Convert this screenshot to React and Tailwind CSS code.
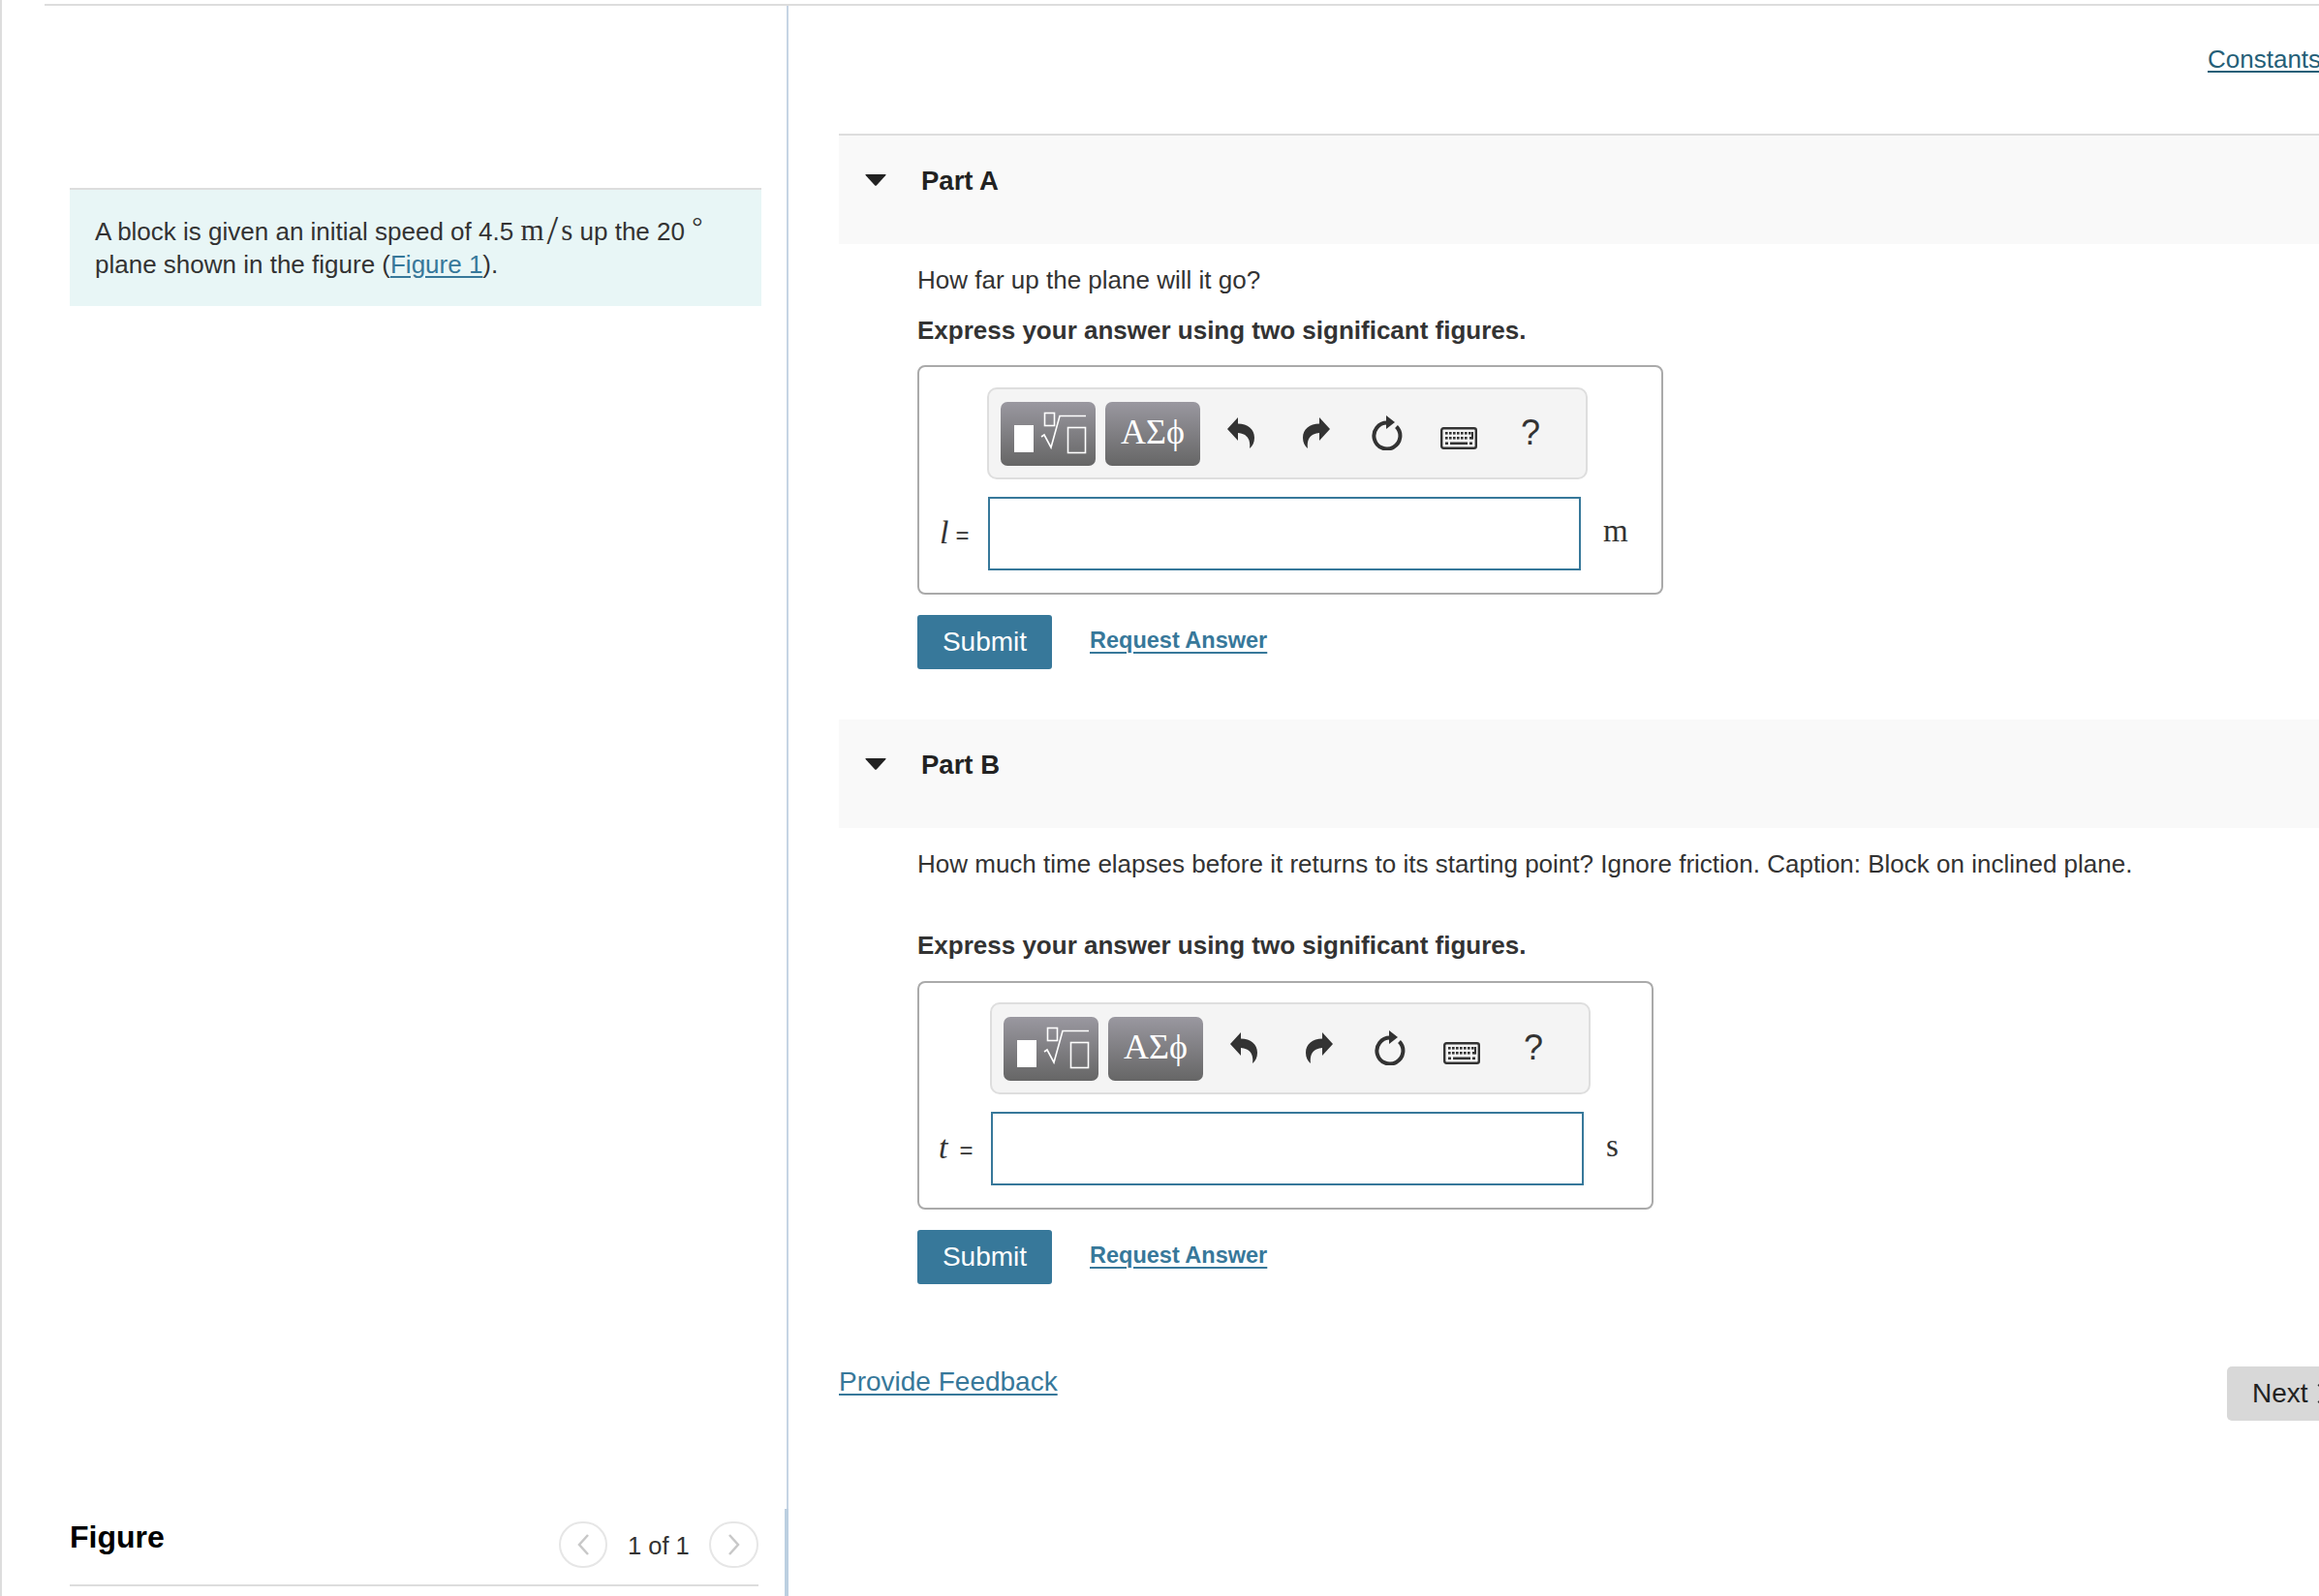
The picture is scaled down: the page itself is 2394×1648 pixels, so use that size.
const sans = "font-['Liberation_Sans',Arial,sans-serif]";

function MathIcon() {
  return (
    <svg viewBox="0 0 98 66" className="w-[98px] h-[66px]" fill="none" stroke="#fff" strokeWidth="1.6">
      <rect x="14" y="24" width="20" height="28" fill="#fff" stroke="none" />
      <rect x="45.5" y="11.5" width="10" height="13" />
      <path d="M42 36 L45 34 L52 47 L61 14.5 H88" />
      <rect x="69.5" y="26.5" width="18" height="26" />
    </svg>
  );
}

function Undo({ flip }) {
  return (
    <svg viewBox="0 0 28 32" className={flip ? "w-[28px] h-[32px] -scale-x-100" : "w-[28px] h-[32px]"} fill="#333">
      <path d="M0 12 L11 0 V6.5 C21 6.5 28 12 28 21 C28 26 26 29.5 23 32 C24 25 22 20 17 17.5 C15 16.5 13 16 11 16 V24 Z" />
    </svg>
  );
}

function Refresh() {
  return (
    <svg viewBox="0 0 32 36" className="w-[32px] h-[36px]" fill="none">
      <path d="M25.5 11.5 A13.5 13.5 0 1 1 16 7.5" stroke="#333" strokeWidth="4" />
      <path d="M15 0 L24 7 L15 14 Z" fill="#333" />
    </svg>
  );
}

function Keyboard() {
  const rows = [
    [5, [5, 9, 13, 17, 21, 25, 29]],
    [10, [5, 9, 13, 17, 21, 25, 30]],
  ];
  return (
    <svg viewBox="0 0 38 23" className="w-[38px] h-[23px]" fill="#333">
      <rect x="1.2" y="1.2" width="35.6" height="20.6" rx="2" fill="none" stroke="#333" strokeWidth="2.4" />
      {rows.map(([y, xs]) => xs.map((x) => <rect key={`${y}-${x}`} x={x} y={y} width="2.6" height="2.6" />))}
      <rect x="32" y="5" width="2" height="7.6" />
      <rect x="5" y="15.5" width="3" height="2.6" />
      <rect x="10" y="15.5" width="18" height="2.6" />
      <rect x="30" y="15.5" width="3" height="2.6" />
    </svg>
  );
}

function Toolbar({ className }) {
  return (
    <div className={`flex items-center h-[95px] w-[620px] pl-[12px] bg-[#f4f4f4] border-2 border-[#dedede] rounded-[10px] ${className}`}>
      <div className="w-[98px] h-[66px] rounded-[7px] bg-gradient-to-b from-[#9a98a0] to-[#666666]">
        <MathIcon />
      </div>
      <div className="ml-[10px] w-[98px] h-[66px] rounded-[7px] bg-gradient-to-b from-[#9a98a0] to-[#666666] flex items-center justify-center pb-[3px] text-white text-[36px] font-['Liberation_Serif',serif]">
        ΑΣϕ
      </div>
      <div className="ml-[28px] mt-[-2px]"><Undo /></div>
      <div className="ml-[50px] mt-[-2px]"><Undo flip /></div>
      <div className="ml-[43px] mt-[-2px]"><Refresh /></div>
      <div className="ml-[39px] mt-[9px]"><Keyboard /></div>
      <div className={`ml-[45px] mt-[-2px] text-[36px] leading-none text-[#333] ${sans}`}>?</div>
    </div>
  );
}

function Part({ name, headerClass, question, questionGap, variable, unit, boxClass, toolbarClass, labelClass, equalsClass, mathGap }) {
  return (
    <section>
      <div className={`flex items-center pl-[27px] pb-[18px] bg-[#f9f9f9] ${headerClass}`}>
        <svg viewBox="0 0 22 12" className="w-[22px] h-[12px] mt-[-2px]" fill="#222">
          <path d="M1 0 H21 Q22 0 21.4 1 L11.8 11.4 Q11 12 10.2 11.4 L0.6 1 Q0 0 1 0 Z" />
        </svg>
        <h2 className="ml-[36px] text-[27.5px] font-bold text-[#222]">{name}</h2>
      </div>
      <div className="pl-[81px]">
        <p className="mt-[20px] leading-[34px] text-[26px] text-[#333]">{question}</p>
        <p className={`${questionGap} leading-[34px] text-[26px] font-bold text-[#333]`}>
          Express your answer using two significant figures.
        </p>
        <div className={`${boxClass} border-2 border-[#aaaaaa] rounded-[8px]`}>
          <Toolbar className={toolbarClass} />
          <div className={`${mathGap} flex items-center h-[76px]`}>
            <div className={`${labelClass} flex items-baseline mb-[4px] text-[#333]`}>
              <span className="italic text-[34px] font-['Liberation_Serif',serif]">{variable}</span>
              <span className={`${equalsClass} text-[24px] ${sans}`}>=</span>
            </div>
            <div className="w-[612px] h-[76px] border-2 border-[#37789a] bg-white" />
            <span className="ml-[23px] mb-[4px] text-[33px] text-[#333] font-['Liberation_Serif',serif]">{unit}</span>
          </div>
        </div>
        <div className="mt-[21px] flex items-center h-[56px]">
          <button className="w-[139px] h-[56px] rounded-[3px] bg-[#37789a] text-white text-[28px]">Submit</button>
          <a className="ml-[39px] mb-[3px] text-[23.5px] font-bold text-[#37789a] underline underline-offset-[4px] decoration-2">Request Answer</a>
        </div>
      </div>
    </section>
  );
}

export default function App() {
  return (
    <div className={`w-[2394px] h-[1648px] overflow-hidden bg-white pt-[4px] border-l-2 border-[#dddddd] ${sans}`}>
      <div className="ml-[44px] h-[2px] bg-[#dddddd]" />
      <div className="flex h-[1642px]">
        <aside className="relative w-[812px] shrink-0 flex flex-col pl-[70px] border-r-2 border-[#c6d4e4]">
          <div className="mt-[188px] w-[714px] border-t-2 border-[#dddddd] bg-[#e8f6f6] pl-[26px] pt-[27px] pb-[26px] text-[26px] leading-[33px] text-[#333]">
            <p className="whitespace-nowrap h-[34px]">
              A block is given an initial speed of 4.5{" "}
              <span className="font-['Liberation_Serif',serif] text-[31px] leading-[0]">m</span>
              <span className="font-['Liberation_Serif',serif] text-[42px] leading-[0] align-[-4px] mx-[3px]">/</span>
              <span className="font-['Liberation_Serif',serif] text-[31px] leading-[0]">s</span>{" "}
              up the 20{" "}
              <span className="font-['Liberation_Serif',serif] text-[28px] align-[5px] leading-[0]">°</span>
            </p>
            <p>
              plane shown in the figure (<a className="text-[#37789a] underline underline-offset-[3px]">Figure 1</a>).
            </p>
          </div>
          <div className="mt-auto mb-[10px] w-[711px] pb-[17px] border-b-2 border-[#dddddd] flex items-start justify-between">
            <h2 className="text-[32px] leading-[32px] font-bold text-black">Figure</h2>
            <div className="flex items-center">
              <div className="w-[50px] h-[48px] rounded-full border-2 border-[#e6e6e6] flex items-center justify-center">
                <svg viewBox="0 0 14 24" className="w-[14px] h-[24px]" fill="none" stroke="#c8c8c8" strokeWidth="2.5"><path d="M12 2 L3 12 L12 22" /></svg>
              </div>
              <span className="ml-[21px] w-[84px] mt-[3px] text-[25.5px] text-[#333]">1 of 1</span>
              <div className="w-[51px] h-[48px] rounded-full border-2 border-[#e6e6e6] flex items-center justify-center">
                <svg viewBox="0 0 14 24" className="w-[14px] h-[24px]" fill="none" stroke="#c8c8c8" strokeWidth="2.5"><path d="M2 2 L11 12 L2 22" /></svg>
              </div>
            </div>
          </div>
          <div className="absolute right-[-2px] bottom-0 w-[4px] h-[90px] bg-[#bccfe0]" />
        </aside>

        <main className="w-[1612px] shrink-0 pl-[52px]">
          <div className="h-[132px] pt-[38px] pl-[1413px] whitespace-nowrap">
            <a className="text-[26px] leading-[34px] text-[#255f78] underline underline-offset-[3px]">Constants</a>
          </div>
          <Part
            name="Part A"
            headerClass="h-[114px] border-t-2 border-[#dddddd]"
            question="How far up the plane will it go?"
            questionGap="mt-[18px]"
            variable="l"
            unit="m"
            boxClass="mt-[19px] w-[770px] h-[237px] pt-[21px]"
            toolbarClass="ml-[70px]"
            labelClass="w-[71px] pl-[21px]"
            equalsClass="ml-[7px]"
            mathGap="mt-[18px]"
          />
          <div className="mt-[52px]">
            <Part
              name="Part B"
              headerClass="h-[112px]"
              question="How much time elapses before it returns to its starting point? Ignore friction. Caption: Block on inclined plane."
              questionGap="mt-[50px]"
              variable="t"
              unit="s"
              boxClass="mt-[20px] w-[760px] h-[236px] pt-[20px]"
              toolbarClass="ml-[73px]"
              labelClass="w-[74px] pl-[20px]"
              equalsClass="ml-[12px]"
              mathGap="mt-[18px]"
            />
          </div>
          <div className="mt-[85px] flex items-start justify-between h-[56px]">
            <a className="text-[28px] leading-[32px] text-[#37789a] underline underline-offset-[3px]">Provide Feedback</a>
            <button className="flex items-center w-[127px] h-[56px] rounded-l-[5px] bg-[#d8d8d8] pl-[26px] text-[28px] text-[#222] whitespace-nowrap">
              Next
              <svg viewBox="0 0 14 24" className="ml-[9px] w-[14px] h-[24px] shrink-0" fill="none" stroke="#333" strokeWidth="4"><path d="M2 2 L11 12 L2 22" /></svg>
            </button>
          </div>
        </main>
      </div>
    </div>
  );
}
